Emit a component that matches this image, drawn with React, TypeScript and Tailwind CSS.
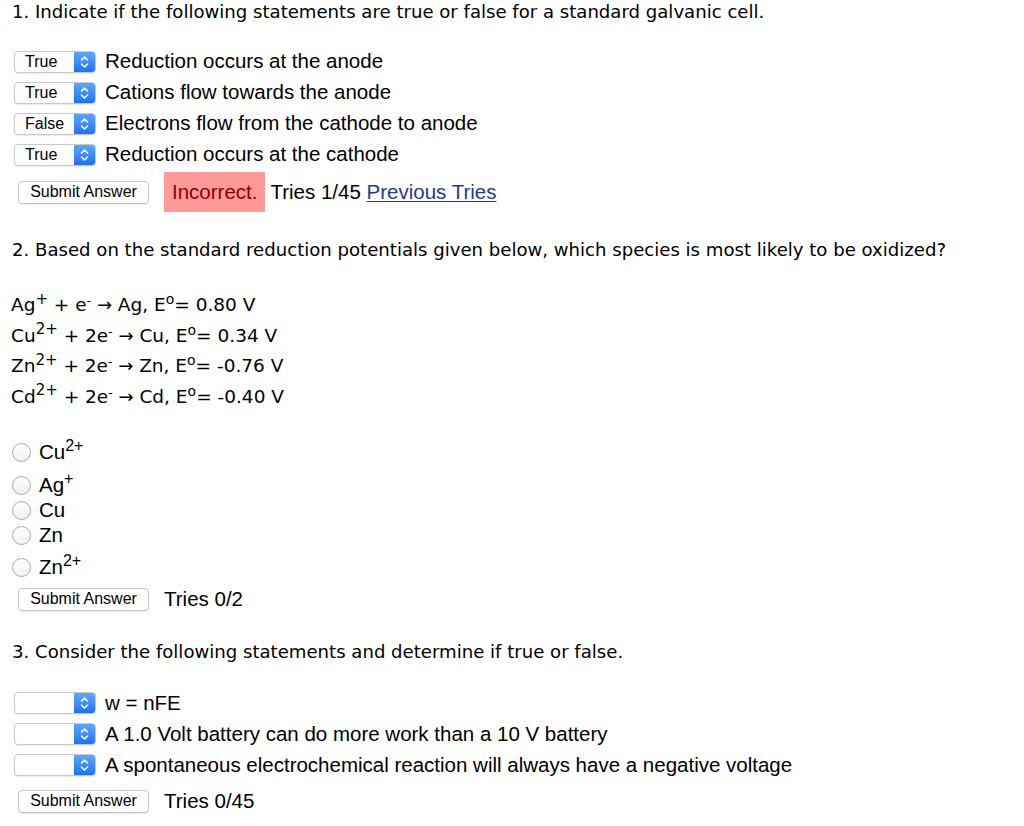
import React from 'react';

const verdana = "font-['DejaVu_Sans',Verdana,sans-serif]";
const helv = "font-['Liberation_Sans',Arial,sans-serif]";

// fake mac-style select
const Select = ({ value }: { value?: string }) => (
  <div className="flex h-[22px] w-[82px] items-stretch rounded-[4px] border border-[#c8c8c8] bg-white shadow-[0_1px_1px_rgba(0,0,0,0.08)]">
    <div className={`flex-1 pl-[10px] text-[16px] leading-[20px] text-black ${helv}`}>{value}</div>
    <div className="flex w-[21px] items-center justify-center rounded-r-[3px] bg-gradient-to-b from-[#5ea6fb] to-[#1c72f2]">
      <svg width="9" height="14" viewBox="0 0 9 14" fill="none" stroke="white" strokeWidth="1.6" strokeLinecap="round" strokeLinejoin="round">
        <path d="M1.5 5 L4.5 2 L7.5 5" />
        <path d="M1.5 9 L4.5 12 L7.5 9" />
      </svg>
    </div>
  </div>
);

const SubmitButton = () => (
  <button className={`h-[23px] w-[131px] rounded-[4px] border border-[#c6c6c6] bg-white text-[16px] leading-[20px] text-black shadow-[0_1px_1px_rgba(0,0,0,0.08)] ${helv}`}>
    Submit Answer
  </button>
);

const Radio = () => (
  <span className="inline-block h-[19px] w-[19px] shrink-0 rounded-full border border-[#a9a9a9] bg-gradient-to-b from-white to-[#f1f1f1]" />
);

const SelectRow = ({ value, text }: { value?: string; text: string }) => (
  <div className="flex h-[31px] items-center pl-[14px]">
    <Select value={value} />
    <span className={`ml-[9px] text-[20.5px] text-black ${helv}`}>{text}</span>
  </div>
);

const Equation = ({ ion, sup, lhs, prod, e }: { ion: string; sup: string; lhs: string; prod: string; e: string }) => (
  <div className={`h-[30.5px] text-[18.5px] leading-[30px] text-black ${verdana}`}>
    {ion}
    <sup className="text-[15px] leading-none">{sup}</sup> + {lhs}
    <sup className="text-[12px] leading-none">-</sup> <span className="text-[18px]">→</span> {prod}, E
    <sup className="text-[14px] leading-none">o</sup>= {e} V
  </div>
);

const RadioRow = ({ label, sup, m }: { label: string; sup?: string; m: string }) => (
  <div className={`flex h-[24px] items-center pl-[12px] ${m}`}>
    <Radio />
    <span className={`ml-[8px] text-[20.5px] leading-none text-black ${helv}`}>
      {label}
      {sup && <sup className="text-[16px] leading-none">{sup}</sup>}
    </span>
  </div>
);

export default function App() {
  return (
    <div className="h-[826px] w-[1024px] overflow-hidden bg-white text-black">
      {/* Question 1 */}
      <div className={`pl-[12px] pt-[0px] text-[18.1px] leading-[24px] ${verdana}`}>
        1. Indicate if the following statements are true or false for a standard galvanic cell.
      </div>
      <div className="mt-[22px]">
        <SelectRow value="True" text="Reduction occurs at the anode" />
        <SelectRow value="True" text="Cations flow towards the anode" />
        <SelectRow value="False" text="Electrons flow from the cathode to anode" />
        <SelectRow value="True" text="Reduction occurs at the cathode" />
      </div>
      <div className="mt-[2px] flex items-center pl-[18px]">
        <SubmitButton />
        <span className={`ml-[15px] bg-[#ff9a9a] px-[8px] py-[8px] text-[20.5px] leading-[24px] text-[#8b0000] ${helv}`}>Incorrect.</span>
        <span className={`ml-[5px] text-[20.5px] ${helv}`}>
          Tries 1/45 <a href="#" className="text-[#1f3a8f] underline decoration-1 underline-offset-2">Previous Tries</a>
        </span>
      </div>

      {/* Question 2 */}
      <div className={`mt-[26px] pl-[12px] text-[18.1px] leading-[24px] ${verdana}`}>
        2. Based on the standard reduction potentials given below, which species is most likely to be oxidized?
      </div>
      <div className="mt-[28px] pl-[11px]">
        <Equation ion="Ag" sup="+" lhs="e" prod="Ag" e="0.80" />
        <Equation ion="Cu" sup="2+" lhs="2e" prod="Cu" e="0.34" />
        <Equation ion="Zn" sup="2+" lhs="2e" prod="Zn" e="-0.76" />
        <Equation ion="Cd" sup="2+" lhs="2e" prod="Cd" e="-0.40" />
      </div>
      <div className="mt-[28px]">
        <RadioRow label="Cu" sup="2+" m="mt-0" />
        <RadioRow label="Ag" sup="+" m="mt-[9px]" />
        <RadioRow label="Cu" m="mt-[1px]" />
        <RadioRow label="Zn" m="mt-[1px]" />
        <RadioRow label="Zn" sup="2+" m="mt-[8px]" />
      </div>
      <div className="mt-[5px] flex items-center pl-[18px]">
        <SubmitButton />
        <span className={`ml-[15px] text-[20.5px] ${helv}`}>Tries 0/2</span>
      </div>

      {/* Question 3 */}
      <div className={`mt-[25px] pl-[12px] text-[18.1px] leading-[24px] ${verdana}`}>
        3. Consider the following statements and determine if true or false.
      </div>
      <div className="mt-[24px]">
        <SelectRow text="w = nFE" />
        <SelectRow text="A 1.0 Volt battery can do more work than a 10 V battery" />
        <SelectRow text="A spontaneous electrochemical reaction will always have a negative voltage" />
      </div>
      <div className="mt-[5px] flex items-center pl-[18px]">
        <SubmitButton />
        <span className={`ml-[15px] text-[20.5px] ${helv}`}>Tries 0/45</span>
      </div>
    </div>
  );
}
